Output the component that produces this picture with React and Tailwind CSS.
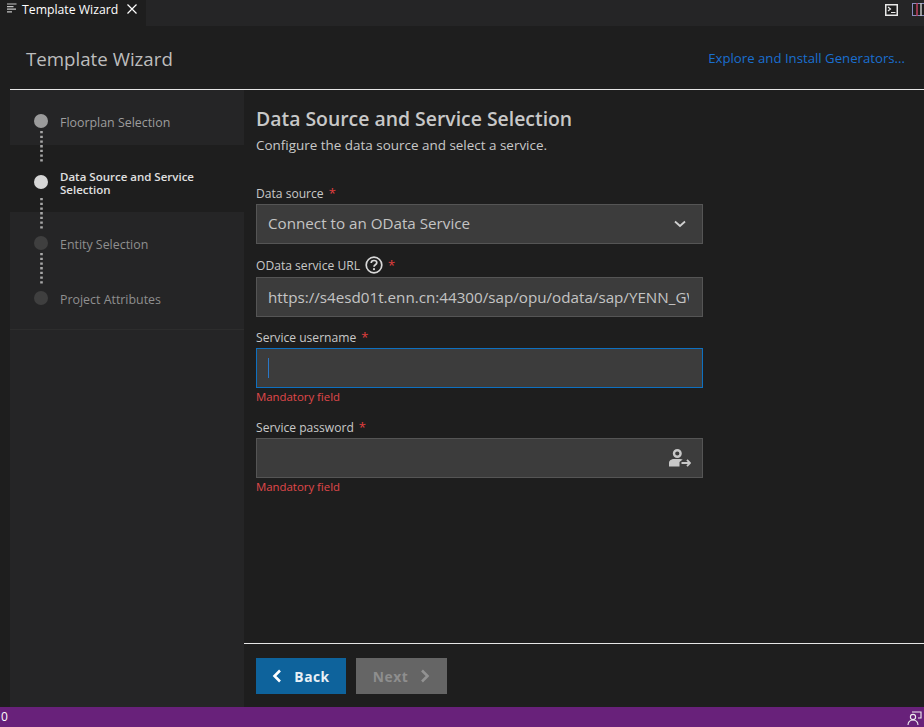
import React from "react";

function Dots({ className = "" }) {
  return (
    <svg width="3" height="32" viewBox="0 0 3 32" className={`absolute z-10 left-[29.5px] ${className}`}>
      <path d="M1.5 0V32" stroke="#a8a8a8" strokeWidth="2.6" strokeDasharray="2.3 2.4" />
    </svg>
  );
}

function Step({ label, state, className = "", circleClass = "", children }) {
  const dot =
    state === "done" ? "bg-[#9b9b9b]" : state === "active" ? "bg-[#d6d6d6]" : "bg-[#3f3f3f]";
  const text =
    state === "done"
      ? "text-[12.4px] text-[#9d9d9d] leading-[18px]"
      : state === "active"
      ? "text-[11.5px] text-[#e0e0e0] font-semibold leading-[13px]"
      : "text-[12.4px] text-[#8f8f8f] leading-[18px]";
  return (
    <div className={`relative flex items-start gap-[12px] pl-[24px] ${className}`}>
      <div className={`w-[14px] h-[14px] rounded-full shrink-0 ${dot} ${circleClass}`} />
      <div className={`w-[150px] ${text}`}>{label}</div>
      {children}
    </div>
  );
}

function Label({ children, help }) {
  return (
    <div className="flex items-center text-[12.1px] leading-[18px] text-[#c8c8c8]">
      <span className="translate-y-px">{children}</span>
      {help && (
        <svg width="18" height="18" viewBox="0 0 18 18" fill="none" className="ml-[5px]">
          <circle cx="9" cy="9" r="7.8" stroke="#d8d8d8" strokeWidth="1.7" />
          <path d="M6.2 7.1c0-1.6 1.2-2.6 2.8-2.6s2.8 1 2.8 2.3c0 2-2.8 1.9-2.8 3.9" stroke="#d8d8d8" strokeWidth="1.7" />
          <circle cx="9" cy="13.2" r="1.1" fill="#d8d8d8" />
        </svg>
      )}
      <span className="text-[#e23f3f] text-[13px] ml-[5px]">*</span>
    </div>
  );
}

function Field({ children, className = "", focused }) {
  return (
    <div
      className={`h-[40px] w-[447px] flex items-center justify-between pl-[11px] pr-[13px] bg-[#3c3c3c] border text-[15.2px] text-[#c4c4c4] ${
        focused ? "border-[#0e70c0]" : "border-[#555555]"
      } ${className}`}
    >
      {children}
    </div>
  );
}

export default function App() {
  return (
    <div
      className="w-[924px] h-[727px] flex flex-col bg-[#1e1e1e] overflow-hidden"
      style={{ fontFamily: '"Open Sans", "Noto Sans", sans-serif' }}
    >
      {/* Tab bar */}
      <div className="h-[26px] shrink-0 flex items-start justify-between bg-[#252526]">
        <div className="h-full w-[146px] flex items-center bg-[#1e1e1e] pl-[7px] pb-[8px]">
          <svg width="10" height="10" viewBox="0 0 10 10" className="shrink-0 -mt-[2px]">
            <path d="M0 1h9.5M0 3.6h6.5M0 6.2h9M0 8.8h5" stroke="#c5c5c5" strokeWidth="1.2" />
          </svg>
          <span className="ml-[5px] text-[12.25px] text-white translate-y-px">Template Wizard</span>
          <svg width="10" height="10" viewBox="0 0 10 10" className="ml-[9px]">
            <path d="M0.5 0.5l9 9M9.5 0.5l-9 9" stroke="#ffffff" strokeWidth="1.2" />
          </svg>
        </div>
        <div className="flex items-center gap-[14px] mt-[3px] -mr-[2px]">
          <svg width="13" height="12" viewBox="0 0 13 12">
            <rect x="0.75" y="0.75" width="11.5" height="10.5" fill="#1e1e1e" stroke="#e8e8e8" strokeWidth="1.5" />
            <path d="M3 3l2.5 2-2.5 2M6 8.5h4.5" stroke="#e8e8e8" strokeWidth="1.2" fill="none" />
          </svg>
          <svg width="14" height="13" viewBox="0 0 14 13">
            <rect x="0.5" y="0.5" width="13" height="12" fill="#1e1e1e" stroke="#8c8cc0" />
            <path d="M5 0v13" stroke="#c04060" strokeWidth="1.5" />
            <path d="M9 0v13" stroke="#c0c0c0" strokeWidth="1.5" />
          </svg>
        </div>
      </div>

      {/* Header */}
      <div className="ml-[10px] h-[64px] shrink-0 flex items-center justify-between border-b border-[#e6e6e6] pl-[16px] pr-[19px]">
        <div className="text-[18.7px] text-[#bdbdbd] mt-[4px]">Template Wizard</div>
        <div className="text-[13.2px] text-[#1a6fd0] mt-[3px]">Explore and Install Generators...</div>
      </div>

      {/* Body */}
      <div className="flex-1 min-h-0 flex pl-[10px]">
        <aside className="w-[234px] shrink-0 bg-[#252526]">
          <div className="border-b border-[#2d2d2d] h-[240px] flex flex-col">
            <Step label="Floorplan Selection" state="done" className="h-[55px] pt-[24px]">
              <Dots className="top-[41px]" />
            </Step>
            <Step
              label="Data Source and Service Selection"
              state="active"
              className="h-[67px] pt-[25px] bg-[#1e1e1e]"
              circleClass="mt-[5px]"
            >
              <Dots className="top-[53px]" />
            </Step>
            <Step label="Entity Selection" state="todo" className="h-[55px] pt-[24px]">
              <Dots className="top-[41px]" />
            </Step>
            <Step label="Project Attributes" state="todo" className="h-[55px] pt-[24px]" />
          </div>
        </aside>

        <main className="flex-1 min-w-0 flex flex-col">
          <div className="flex-1 pl-[12px] pt-[16px]">
            <h1 className="text-[19.4px] leading-[26px] font-semibold text-[#c8c8c8]">
              Data Source and Service Selection
            </h1>
            <p className="text-[13.45px] leading-[18px] text-[#c8c8c8] mt-[4px]">
              Configure the data source and select a service.
            </p>

            <div className="mt-[30px]">
              <Label>Data source</Label>
              <Field className="mt-[2px]">
                <span className="-translate-y-px">Connect to an OData Service</span>
                <svg width="12" height="8" viewBox="0 0 12 8" fill="none" className="mr-[3px] -mt-[1px]">
                  <path d="M1 1.5l5 4.5 5-4.5" stroke="#d0d0d0" strokeWidth="1.8" />
                </svg>
              </Field>
            </div>

            <div className="mt-[12px]">
              <Label help>OData service URL</Label>
              <Field className="mt-[3px] overflow-hidden">
                <span className="block w-[422px] overflow-hidden whitespace-nowrap">
                  https://s4esd01t.enn.cn:44300/sap/opu/odata/sap/YENN_GW_SRV
                </span>
              </Field>
            </div>

            <div className="mt-[11px]">
              <Label>Service username</Label>
              <Field focused className="mt-[2px]">
                <div className="w-px h-[20px] bg-[#2a78c8]" />
              </Field>
              <div className="text-[11.4px] leading-[16px] text-[#e0484a] mt-[1px]">Mandatory field</div>
            </div>

            <div className="mt-[13px]">
              <Label>Service password</Label>
              <Field className="mt-[2px] h-[39px]">
                <span />
                <svg width="22" height="18" viewBox="0 0 22 18" fill="none" className="-mr-[2px]">
                  <circle cx="8.3" cy="4.5" r="3.3" stroke="#c8c8c8" strokeWidth="2.4" />
                  <path d="M0 17.5v-3.5c0-2.4 2.3-4 5-4h6c1 0 2 .2 2.7.6L10.5 13v4.5H0z" fill="#c8c8c8" />
                  <path d="M12.5 14h8M18 10.8l3 3.2-3 3.2" stroke="#c8c8c8" strokeWidth="1.8" />
                </svg>
              </Field>
              <div className="text-[11.4px] leading-[16px] text-[#e0484a] mt-[1px]">Mandatory field</div>
            </div>
          </div>

          <div className="h-[64px] shrink-0 border-t border-[#e6e6e6] pl-[12px] pt-[14px] flex gap-[10px]">
            <button className="w-[90px] h-[36px] flex items-center justify-center gap-[12px] bg-[#0e639c] text-[13.8px] font-bold tracking-[0.5px] text-[#e8f0f6]">
              <svg width="10" height="14" viewBox="0 0 10 14" fill="none">
                <path d="M8 1.5L2.5 7 8 12.5" stroke="#ffffff" strokeWidth="2.6" />
              </svg>
              <span className="translate-y-px">Back</span>
            </button>
            <button className="w-[91px] h-[36px] flex items-center justify-center gap-[12px] bg-[#656565] text-[13.8px] font-bold tracking-[0.5px] text-[#8e8e8e]">
              <span className="translate-y-px">Next</span>
              <svg width="10" height="14" viewBox="0 0 10 14" fill="none">
                <path d="M2 1.5L7.5 7 2 12.5" stroke="#929292" strokeWidth="2.6" />
              </svg>
            </button>
          </div>
        </main>
      </div>

      {/* Status bar */}
      <div className="h-[20px] shrink-0 bg-[#68217a] flex items-center justify-between text-[12px] text-white pr-[2px]">
        <span className="ml-px">0</span>
        <svg width="15" height="15" viewBox="0 0 15 15" fill="none" className="mt-[2px]">
          <path d="M5 1h9v6h-3" stroke="#eeeeee" strokeWidth="1.1" />
          <circle cx="6" cy="6" r="2.6" stroke="#eeeeee" strokeWidth="1.1" />
          <path d="M1 14c0-3 2-5 5-5s5 2 5 5" stroke="#eeeeee" strokeWidth="1.1" />
        </svg>
      </div>
    </div>
  );
}
